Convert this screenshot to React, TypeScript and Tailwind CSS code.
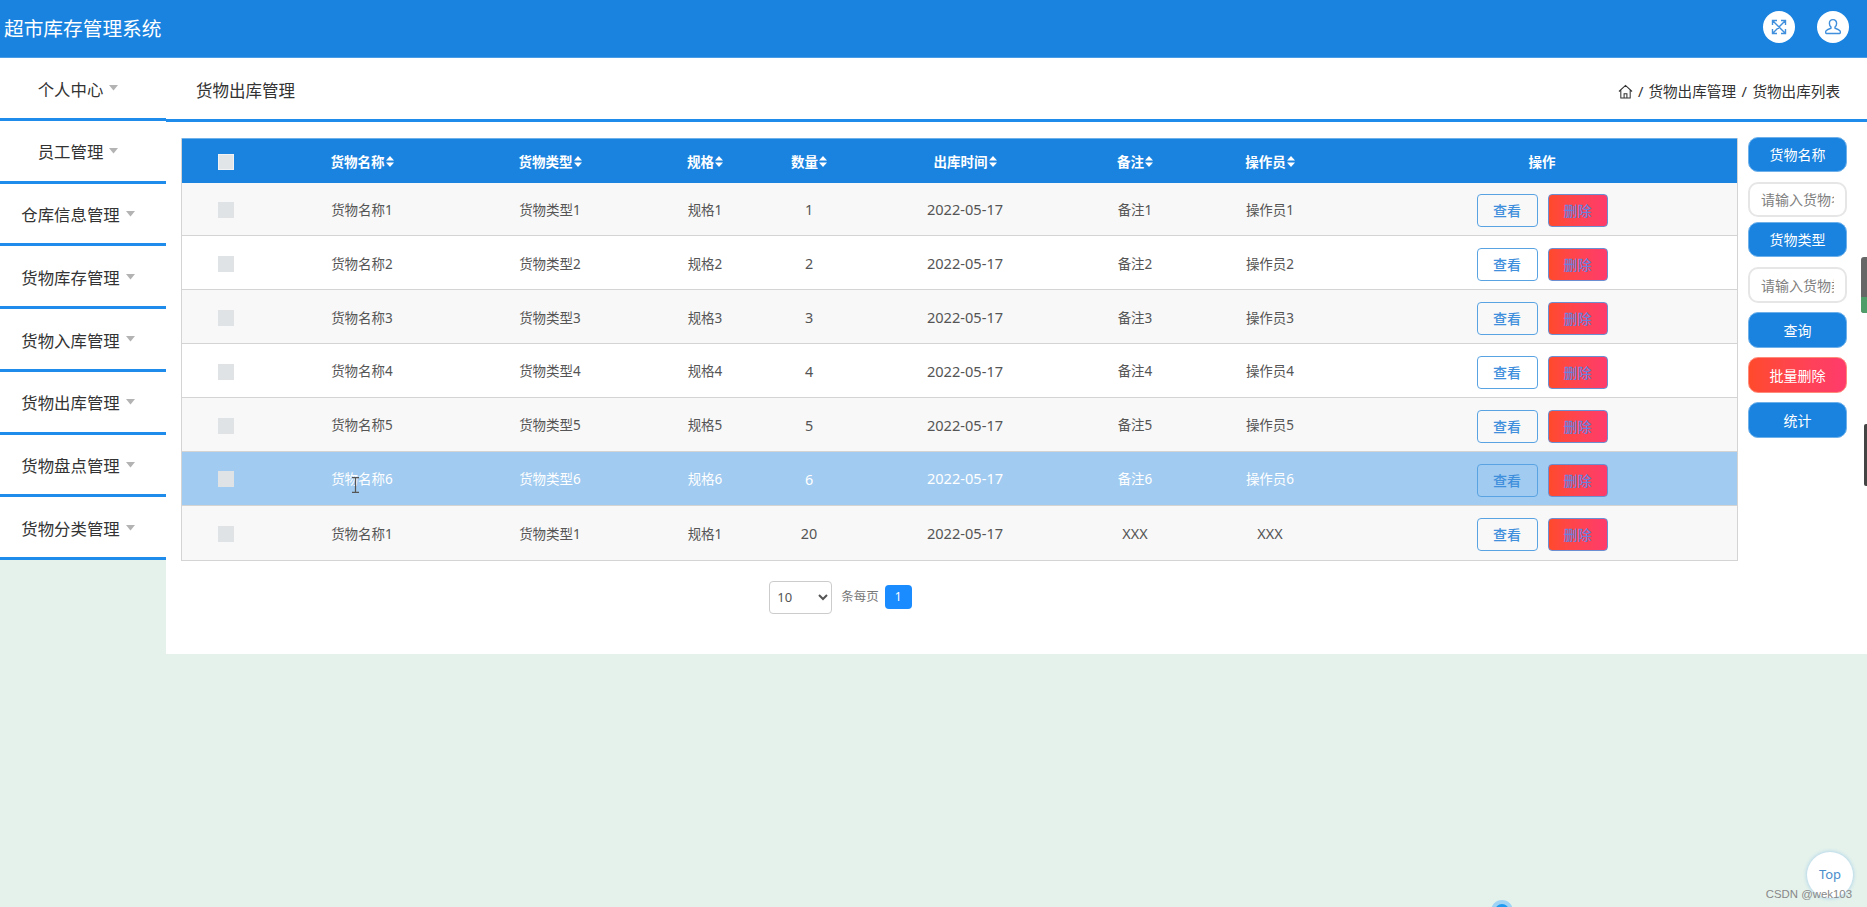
const font = { fontFamily: "'Noto Sans', 'Noto Sans CJK SC', sans-serif" };

const menu = ['个人中心', '员工管理', '仓库信息管理', '货物库存管理', '货物入库管理', '货物出库管理', '货物盘点管理', '货物分类管理'];

const rows = [
  { name: '货物名称1', type: '货物类型1', spec: '规格1', qty: 1, note: '备注1', op: '操作员1' },
  { name: '货物名称2', type: '货物类型2', spec: '规格2', qty: 2, note: '备注2', op: '操作员2' },
  { name: '货物名称3', type: '货物类型3', spec: '规格3', qty: 3, note: '备注3', op: '操作员3' },
  { name: '货物名称4', type: '货物类型4', spec: '规格4', qty: 4, note: '备注4', op: '操作员4' },
  { name: '货物名称5', type: '货物类型5', spec: '规格5', qty: 5, note: '备注5', op: '操作员5' },
  { name: '货物名称6', type: '货物类型6', spec: '规格6', qty: 6, note: '备注6', op: '操作员6', active: true },
  { name: '货物名称1', type: '货物类型1', spec: '规格1', qty: 20, note: 'XXX', op: 'XXX' },
];

const cols = 'grid grid-cols-[87px_186px_190px_120px_88px_224px_116px_154px_1fr] items-center pt-[2px] text-center';

function Caret() {
  return (
    <svg width="9" height="6" viewBox="0 0 9 6" className="ml-[6px] mb-[3px]">
      <polygon points="0,0 9,0 4.5,5.5" fill="#b3b3b3" />
    </svg>
  );
}

function Sort({ label }: { label: string }) {
  return (
    <span className="inline-flex items-center justify-center">
      {label}
      <svg width="8" height="11" viewBox="0 0 8 11" className="ml-[1px]">
        <polygon points="4,0 8,4.5 0,4.5" fill="#fff" />
        <polygon points="0,6.5 8,6.5 4,11" fill="#fff" />
      </svg>
    </span>
  );
}

export default function App() {
  return (
    <div className="relative h-[907px] w-full overflow-hidden bg-[#e5f2eb]" style={font}>
      {/* 顶栏 */}
      <header className="flex h-[58px] items-center justify-between border-b border-[#4a9ce6] bg-[#1a83df] pl-[4px] pr-[18px]">
        <div className="text-[19.7px] text-white">超市库存管理系统</div>
        <div className="flex items-center gap-[22px] pb-[3px]">
          <div className="flex h-[32px] w-[32px] items-center justify-center rounded-full bg-white">
            <svg width="18" height="18" viewBox="0 0 18 18" fill="none" stroke="#3f8fdc" strokeWidth="1.4">
              <path d="M2.500 2.500 15.500 15.500M15.500 2.500 2.500 15.500M2.500 7V2.500H7M11 2.500h4.500V7M2.500 11v4.500H7M15.500 11v4.500H11" />
            </svg>
          </div>
          <div className="flex h-[32px] w-[32px] items-center justify-center rounded-full bg-white">
            <svg width="18" height="18" viewBox="0 0 18 18" fill="none" stroke="#3f8fdc" strokeWidth="1.4">
              <path d="M9 1.600c-2.200 0-3.600 1.700-3.600 3.900 0 1.500.7 2.800 1.600 3.500v1.200c-1.600.6-4.100 1.500-5 2.700-.5.7-.5 2.600.3 2.600h13.400c.8 0 .8-1.900.3-2.600-.9-1.200-3.400-2.100-5-2.700V9c.9-.7 1.600-2 1.600-3.500 0-2.200-1.400-3.900-3.600-3.900z" />
            </svg>
          </div>
        </div>
      </header>

      <div className="flex items-start">
        {/* 侧边菜单 */}
        <aside className="w-[166px] shrink-0 bg-white">
          {menu.map((item) => (
            <div
              key={item}
              className="flex h-[62.75px] items-center justify-center border-b-[3px] border-[#1f8ceb] pr-[10px] pt-[4px] text-[16.4px] text-[#333]"
            >
              {item}
              <Caret />
            </div>
          ))}
        </aside>

        {/* 主内容 */}
        <main className="h-[596px] flex-1 bg-white">
          <div className="flex h-[64px] items-center justify-between border-b-[3px] border-[#1f8ceb] pl-[30px] pr-[27px] pt-[6px]">
            <div className="text-[16.5px] text-[#333]">货物出库管理</div>
            <div className="flex items-center text-[14.6px] text-[#333]">
              <svg width="15" height="15" viewBox="0 0 16 16" fill="none" stroke="#333" strokeWidth="1.1">
                <path d="M1 8 8 1.500 15 8M3 6.500V15h10V6.500M6.500 15v-4.500h3V15" />
              </svg>
              <span className="mx-[5px]">/</span>
              <span>货物出库管理</span>
              <span className="mx-[5.5px]">/</span>
              <span>货物出库列表</span>
            </div>
          </div>

          <div className="flex items-start pl-[15px] pt-[15px]">
            <div className="w-[1557px] shrink-0 pt-[1px]">
              {/* 表格 */}
              <div className="border-x-[1.5px] border-b-[1.5px] border-[#d4d4d4]">
                <div className={`${cols} h-[44.5px] border-t border-[#6db0ea] bg-[#1a83df] text-[13.5px] font-bold text-white`}>
                  <div className="flex justify-center">
                    <div className="h-[16px] w-[16px] border border-[#f0f2f4] bg-[#e2e5e8]" />
                  </div>
                  <Sort label="货物名称" />
                  <Sort label="货物类型" />
                  <Sort label="规格" />
                  <Sort label="数量" />
                  <Sort label="出库时间" />
                  <Sort label="备注" />
                  <Sort label="操作员" />
                  <div>操作</div>
                </div>
                {rows.map((row, i) => (
                  <div
                    key={i}
                    className={`${cols} h-[53.9px] border-b-[1.5px] border-[#d4d4d4] text-[13.5px] last:border-b-0 ${
                      row.active ? 'bg-[#a1cbf0] text-white' : i % 2 === 0 ? 'bg-[#f8f8f8] text-[#555]' : 'bg-white text-[#555]'
                    }`}
                  >
                    <div className="flex justify-center">
                      <div className="h-[16px] w-[16px] bg-[#dfe3e6]" />
                    </div>
                    <div>{row.name}</div>
                    <div>{row.type}</div>
                    <div>{row.spec}</div>
                    <div className="text-[14.4px]">{row.qty}</div>
                    <div className="text-[14.6px]">2022-05-17</div>
                    <div className={row.note === 'XXX' ? 'text-[14.4px]' : ''}>{row.note}</div>
                    <div className={row.op === 'XXX' ? 'text-[14.4px]' : ''}>{row.op}</div>
                    <div className="flex justify-center gap-[10px] pt-[2px]">
                      <button className="h-[33px] w-[61px] rounded-[4px] border-[1.5px] border-[#5aa3e3] text-[14px] font-medium text-[#3f8fdc]">
                        查看
                      </button>
                      <button className="h-[33px] w-[60px] rounded-[4px] border-[1.5px] border-[#6b8fd0] bg-gradient-to-r from-[#ff4a2b] to-[#ff3b6b] text-[14px] font-medium text-[#6b7fdc]">
                        删除
                      </button>
                    </div>
                  </div>
                ))}
              </div>

              {/* 分页 */}
              <div className="mt-[20px] flex items-center justify-center pr-[238px]">
                <select className="h-[33px] w-[63px] rounded-[4px] border border-[#ccc] bg-white pl-[3px] text-[13px] text-[#555]">
                  <option>10</option>
                </select>
                <span className="ml-[9px] text-[12.5px] text-[#777]">条每页</span>
                <span className="ml-[6px] flex h-[24px] w-[27px] items-center justify-center rounded-[4px] bg-[#1a8cff] text-[12px] text-white">
                  1
                </span>
              </div>
            </div>

            {/* 右侧查询 */}
            <div className="ml-[10px] flex w-[99px] shrink-0 flex-col">
              <div className="flex h-[35px] items-center justify-center rounded-[10px] border border-[#6db0ea] bg-[#1a83df] text-[14px] text-white">
                货物名称
              </div>
              <input
                placeholder="请输入货物名称"
                className="mt-[10px] h-[35px] w-full rounded-[10px] border-2 border-[#e6e6e6] bg-white pl-[11px] pr-[11px] text-[14px] placeholder:text-[#808080]"
              />
              <div className="mt-[5px] flex h-[35px] items-center justify-center rounded-[10px] border border-[#6db0ea] bg-[#1a83df] text-[14px] text-white">
                货物类型
              </div>
              <input
                placeholder="请输入货物类型"
                className="mt-[10px] h-[36px] w-full rounded-[10px] border-2 border-[#e6e6e6] bg-white pl-[11px] pr-[11px] text-[14px] placeholder:text-[#808080]"
              />
              <button className="mt-[9px] h-[36px] rounded-[10px] border border-[#6db0ea] bg-[#1a83df] text-[14px] text-white">查询</button>
              <button className="mt-[9px] h-[36px] rounded-[10px] border border-[#ff8a7a] bg-gradient-to-r from-[#ff4a2b] to-[#ff3b6b] text-[14px] text-white">
                批量删除
              </button>
              <button className="mt-[9px] h-[36px] rounded-[10px] border border-[#6db0ea] bg-[#1a83df] text-[14px] text-white">统计</button>
            </div>
          </div>
        </main>
      </div>

      {/* 浮层 */}
      <div className="absolute left-[1807px] top-[852px] flex h-[46px] w-[46px] items-center justify-center rounded-full bg-white text-[13px] text-[#4a8ecb] shadow-[0_0_4px_#9cc9ea]">
        Top
      </div>
      <div
        className="absolute right-[15px] top-[886px] text-[11.4px] text-[#888]"
        style={{ fontFamily: "'Liberation Sans', sans-serif" }}
      >
        CSDN @wek103
      </div>
      <div className="absolute left-[1491px] top-[900px] h-[22px] w-[22px] rounded-full bg-[#9ed3f5]">
        <div className="mx-auto mt-[4px] h-[14px] w-[14px] rounded-full bg-[#1e9bf0]" />
      </div>
      <div className="absolute left-[1861px] top-[257px] h-[56px] w-[6px] rounded-l-[3px] bg-[#666]">
        <div className="mt-[40px] h-[16px] w-full rounded-bl-[3px] bg-[#4f9d69]" />
      </div>
      <div className="absolute left-[1864px] top-[424px] h-[62px] w-[3px] rounded-l-[2px] bg-[#444]" />
      {/* 光标 */}
      <svg width="9" height="16" viewBox="0 0 9 16" className="absolute left-[351px] top-[477px]" fill="none" stroke="#555" strokeWidth="1.2">
        <path d="M1 .6h7M4.500.6v14.800M1 15.400h7" />
      </svg>
    </div>
  );
}
